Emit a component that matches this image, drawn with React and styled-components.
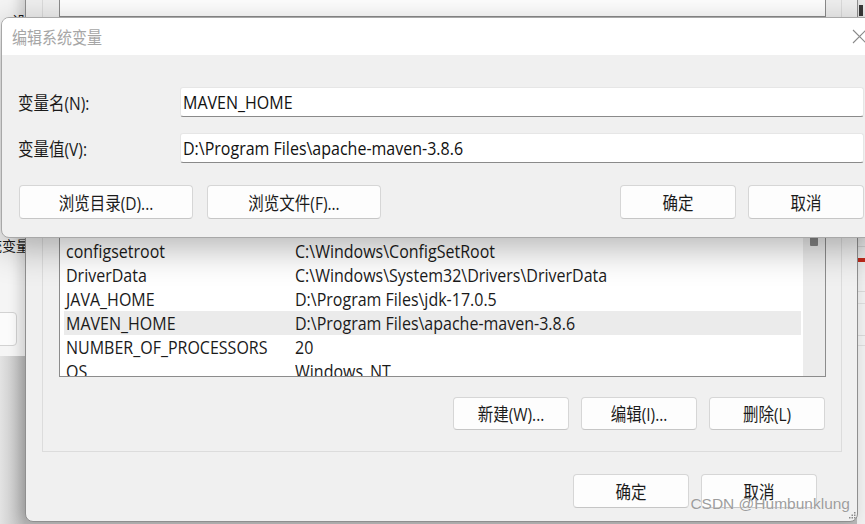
import React from "react";
import styled, { createGlobalStyle } from "styled-components";

const FONT = `"Open Sans", "Noto Sans CJK SC", "Noto Sans", sans-serif`;

const Global = createGlobalStyle`
  html, body { margin: 0; padding: 0; }
  body {
    width: 865px; height: 524px; overflow: hidden;
    background: #f0f0f0;
    font-family: ${FONT};
  }
`;

const Desktop = styled.div`
  position: relative;
  width: 865px;
  height: 524px;
  overflow: hidden;
  background: linear-gradient(to right, #e3e3e3 0px, #bababa 25px);
  font-family: ${FONT};
  color: #1a1a1a;
`;

const Tx = styled.span`
  display: inline-block;
  white-space: nowrap;
  transform: scaleY(1.15);
`;

/* ---------- window behind on the left ---------- */
const SideWindow = styled.div`
  position: absolute;
  left: -300px;
  top: 0;
  width: 325px;
  height: 356px;
  background: #f5f5f5;
  display: flex;
  flex-direction: column;
  padding-top: 10px;
  box-sizing: border-box;
  font-size: 14px;
`;

const SideText = styled.div`
  padding-left: ${(p) => p.$x}px;
  margin-top: ${(p) => p.$mt || 0}px;
  white-space: nowrap;
`;

const SideButton = styled.div`
  align-self: flex-end;
  margin-right: 8px;
  margin-top: ${(p) => p.$mt}px;
  width: 120px;
  height: 34px;
  box-sizing: border-box;
  background: #fbfbfb;
  border: 1px solid #d2d2d2;
  border-radius: 4px;
`;

/* ---------- window behind on the right ---------- */
const RightWindow = styled.div`
  position: absolute;
  left: 857px;
  top: 0;
  width: 40px;
  height: 524px;
  background: #efefef;
  display: flex;
  flex-direction: column;
`;

const RightMark = styled.div`
  margin-top: ${(p) => p.$mt}px;
  margin-left: ${(p) => p.$ml || 0}px;
  width: ${(p) => p.$w}px;
  height: ${(p) => p.$h}px;
  background: ${(p) => p.$c};
`;

/* ---------- environment variables window ---------- */
const MainWindow = styled.div`
  position: absolute;
  left: 25px;
  top: -60px;
  width: 833px;
  height: 582px;
  box-sizing: border-box;
  border: 1px solid #8f8f8f;
  border-radius: 0 0 8px 8px;
  background: #f0f0f0;
  box-shadow: -4px 0 14px rgba(0, 0, 0, 0.18);
  display: flex;
  flex-direction: column;
  padding: 0 15px 0 16px;
`;

const GroupBox = styled.div`
  box-sizing: border-box;
  border: 1px solid #dcdcdc;
  margin-top: ${(p) => p.$mt}px;
  height: ${(p) => p.$h}px;
  padding: ${(p) => p.$pt}px 15px 0 16px;
  display: flex;
  flex-direction: column;
`;

const ListBox = styled.div`
  box-sizing: border-box;
  height: ${(p) => p.$h}px;
  border: 1px solid #8c8c8c;
  background: #ffffff;
  display: flex;
  overflow: hidden;
`;

const Rows = styled.div`
  flex: 1;
  padding: 0 2px 0 4px;
  overflow: hidden;
  font-size: 16px;
`;

const Row = styled.div`
  display: grid;
  grid-template-columns: 229px 1fr;
  align-items: center;
  height: 24px;
  padding-left: 2px;
  background: ${(p) => (p.$selected ? "#ebebeb" : "transparent")};
`;

const ScrollTrack = styled.div`
  width: 22px;
  background: #ececec;
  display: flex;
  justify-content: center;
`;

const ScrollThumb = styled.div`
  margin-top: 2px;
  width: 8px;
  height: 29px;
  background: #858585;
  border-radius: 1px;
`;

const ButtonRow = styled.div`
  display: flex;
  justify-content: flex-end;
  gap: 12px;
  margin-top: ${(p) => p.$mt}px;
  padding-right: ${(p) => p.$pr || 0}px;
`;

const Button = styled.div`
  box-sizing: border-box;
  width: ${(p) => p.$w || 116}px;
  height: ${(p) => p.$h || 34}px;
  display: flex;
  align-items: center;
  justify-content: center;
  background: #fdfdfd;
  border: 1px solid #d6d6d6;
  border-bottom-color: #c6c6c6;
  border-radius: 4px;
  font-size: 15.5px;
  color: #1b1b1b;
`;

const Grip = styled.svg`
  position: absolute;
  right: 1px;
  bottom: 2px;
`;

/* ---------- front dialog ---------- */
const Dialog = styled.div`
  position: absolute;
  left: 1px;
  top: 17px;
  width: 880px;
  height: 221px;
  box-sizing: border-box;
  border: 1px solid #a8a8a8;
  border-radius: 8px;
  background: #f0f0f0;
  overflow: hidden;
  box-shadow: 0 10px 36px rgba(0, 0, 0, 0.3);
  display: flex;
  flex-direction: column;
`;

const TitleBar = styled.div`
  height: 37px;
  background: #ffffff;
  display: flex;
  align-items: center;
  padding: 0 13px 0 10px;
  font-size: 15px;
  color: #a6a6a6;
`;

const CloseIcon = styled.svg`
  margin-left: auto;
`;

const Body = styled.div`
  flex: 1;
  padding: 32px 16px 18px 16px;
  display: flex;
  flex-direction: column;
`;

const Form = styled.div`
  display: grid;
  grid-template-columns: 162px 1fr;
  row-gap: 16px;
  align-items: center;
  font-size: 15.5px;
`;

const Field = styled.div`
  box-sizing: border-box;
  height: 30px;
  display: flex;
  align-items: center;
  padding-left: 2px;
  background: #ffffff;
  border: 1px solid #e6e6e6;
  border-bottom: 1px solid #8a8a8a;
  border-radius: 3px;
  font-size: 16px;
  color: #111;
`;

const DialogButtons = styled.div`
  display: flex;
  gap: 12px;
  margin-top: 22px;
  padding-left: 1px;
`;

const BrowseGroup = styled.div`
  display: flex;
  gap: 14px;
  margin-right: auto;
`;

const Watermark = styled.div`
  position: absolute;
  right: 15px;
  top: 495px;
  font-family: "Liberation Sans", Arial, sans-serif;
  font-size: 15.5px;
  color: #9d9d9d;
  text-shadow: 0 0 1px #ffffff;
  white-space: nowrap;
`;

const rows = [
  ["ComSpec", "C:\\WINDOWS\\system32\\cmd.exe"],
  ["configsetroot", "C:\\Windows\\ConfigSetRoot"],
  ["DriverData", "C:\\Windows\\System32\\Drivers\\DriverData"],
  ["JAVA_HOME", "D:\\Program Files\\jdk-17.0.5"],
  ["MAVEN_HOME", "D:\\Program Files\\apache-maven-3.8.6", true],
  ["NUMBER_OF_PROCESSORS", "20"],
  ["OS", "Windows_NT"],
];

export default function App() {
  return (
    <>
      <Global />
      <Desktop>
        <SideWindow>
          <SideText $x={312}>设置</SideText>
          <SideText $x={274} $mt={205}>系统变量</SideText>
          <SideButton $mt={57} />
        </SideWindow>

        <RightWindow>
          <RightMark $mt={5} $ml={2} $w={4} $h={11} $c="#3a3a3a" />
          <RightMark $mt={230} $w={40} $h={1} $c="#d8d8d8" />
          <RightMark $mt={11} $w={40} $h={4} $c="#c42b1c" />
          <RightMark $mt={29} $w={40} $h={1} $c="#d8d8d8" />
          <RightMark $mt={11} $w={40} $h={1} $c="#dcdcdc" />
          <RightMark $mt={31} $w={40} $h={1} $c="#d8d8d8" />
          <RightMark $mt={9} $w={40} $h={1} $c="#dcdcdc" />
        </RightWindow>

        <MainWindow>
          <GroupBox $mt={10} $h={220} $pt={8}>
            <ListBox $h={57} />
          </GroupBox>
          <GroupBox $mt={14} $h={267} $pt={28}>
            <ListBox $h={163}>
              <Rows>
                {rows.map(([name, value, sel]) => (
                  <Row key={name} $selected={sel}>
                    <Tx>{name}</Tx>
                    <Tx>{value}</Tx>
                  </Row>
                ))}
              </Rows>
              <ScrollTrack>
                <ScrollThumb />
              </ScrollTrack>
            </ListBox>
            <ButtonRow $mt={20} $pr={1}>
              <Button $h={33}><Tx>新建(W)...</Tx></Button>
              <Button $h={33}><Tx>编辑(I)...</Tx></Button>
              <Button $h={33}><Tx>删除(L)</Tx></Button>
            </ButtonRow>
          </GroupBox>
          <ButtonRow $mt={22} $pr={25}>
            <Button><Tx>确定</Tx></Button>
            <Button><Tx>取消</Tx></Button>
          </ButtonRow>
          <Grip width="7" height="7" viewBox="0 0 7 7">
            <g fill="#8a8a8a">
              <rect x="5" y="0" width="1.5" height="1.5" />
              <rect x="2.5" y="2.5" width="1.5" height="1.5" />
              <rect x="5" y="2.5" width="1.5" height="1.5" />
              <rect x="0" y="5" width="1.5" height="1.5" />
              <rect x="2.5" y="5" width="1.5" height="1.5" />
              <rect x="5" y="5" width="1.5" height="1.5" />
            </g>
          </Grip>
        </MainWindow>

        <Dialog>
          <TitleBar>
            <Tx>编辑系统变量</Tx>
            <CloseIcon width="15" height="15" viewBox="0 0 15 15">
              <path d="M1 1 L14 14 M14 1 L1 14" stroke="#8a8a8a" strokeWidth="1.1" fill="none" />
            </CloseIcon>
          </TitleBar>
          <Body>
            <Form>
              <Tx>变量名(N):</Tx>
              <Field><Tx>MAVEN_HOME</Tx></Field>
              <Tx>变量值(V):</Tx>
              <Field><Tx>D:\Program Files\apache-maven-3.8.6</Tx></Field>
            </Form>
            <DialogButtons>
              <BrowseGroup>
                <Button $w={174}><Tx>浏览目录(D)...</Tx></Button>
                <Button $w={174}><Tx>浏览文件(F)...</Tx></Button>
              </BrowseGroup>
              <Button><Tx>确定</Tx></Button>
              <Button><Tx>取消</Tx></Button>
            </DialogButtons>
          </Body>
        </Dialog>

        <Watermark>CSDN @Humbunklung</Watermark>
      </Desktop>
    </>
  );
}
